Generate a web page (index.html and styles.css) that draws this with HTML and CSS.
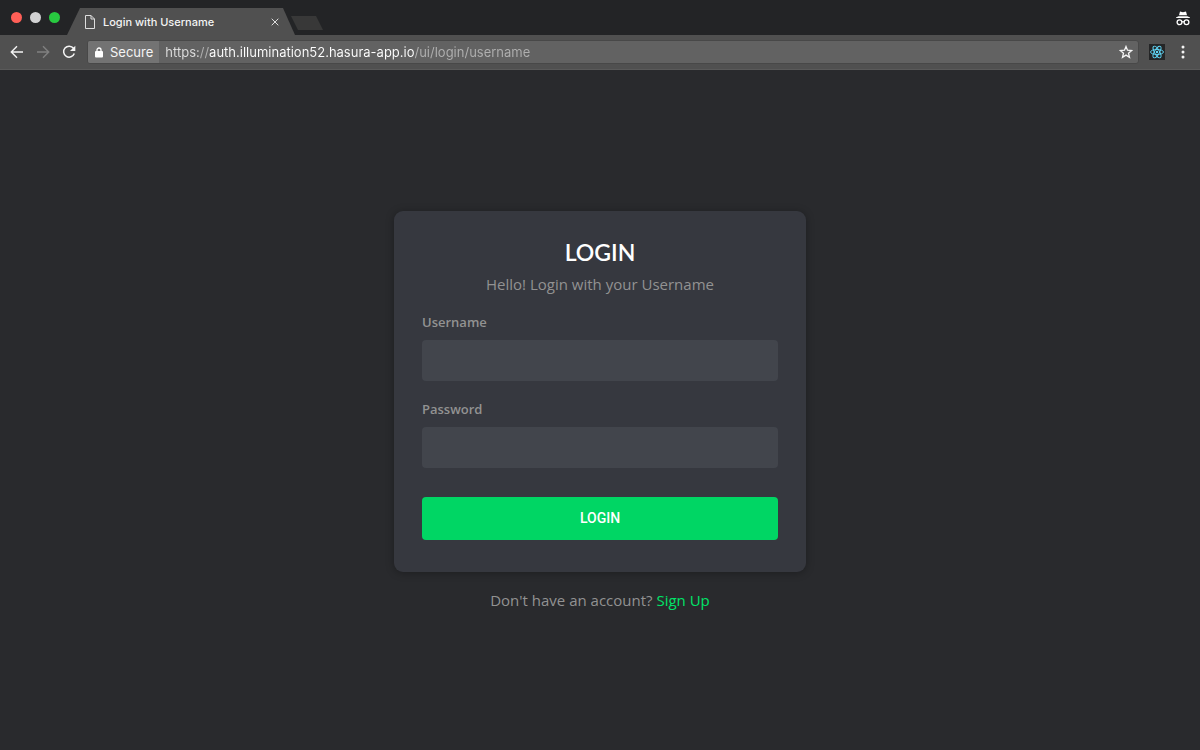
FILE: index.html
```html
<!DOCTYPE html>
<html lang="en">
<head>
<meta charset="UTF-8">
<meta name="viewport" content="width=device-width, initial-scale=1">
<title>Login with Username</title>
<link rel="stylesheet" href="styles.css">
</head>

<body>

<!-- Browser window -->
<header class="browser">
    <div class="tab-bar">
        <div class="lights">
            <button class="light red" aria-label="Close window"></button>
            <button class="light gray" aria-label="Minimize window"></button>
            <button class="light green" aria-label="Zoom window"></button>
        </div>
        <div class="tab">
            <svg class="page-icon" width="10" height="14" viewBox="0 0 10 14" fill="none" stroke="currentColor">
                <path d="M.5 .5H6L9.500 4V13.500H.5Z M6 .5V4H9.500"/>
            </svg>
            <span class="tab-title">Login with Username</span>
            <button class="tab-close" aria-label="Close tab">
                <svg width="8" height="8" viewBox="0 0 8 8" stroke="currentColor"><path d="M.7 .7 7.300 7.300M7.300 .7 .7 7.300"/></svg>
            </button>
        </div>
        <button class="new-tab" aria-label="New tab"></button>
        <svg class="incognito" width="14" height="15" viewBox="0 0 14 15" fill="none">
            <path d="M4 0.500 7 1.200 10 .5 11 4.200H3Z" fill="#fff"/>
            <path d="M0 6.500 2.500 5.300H11.500L14 6.500V7H0Z" fill="#fff"/>
            <circle cx="3.500" cy="11.300" r="2.400" stroke="#fff" stroke-width="1.300"/>
            <circle cx="10.500" cy="11.300" r="2.400" stroke="#fff" stroke-width="1.300"/>
            <path d="M5.800 11Q7 10.200 8.200 11" stroke="#fff" stroke-width="1.200"/>
        </svg>
    </div>

    <div class="toolbar">
        <button class="tool" aria-label="Back">
            <svg width="14" height="14" viewBox="0 0 14 14" fill="none" stroke="currentColor" stroke-width="1.400"><path d="M13 7H1.500M7 1.300 1.300 7 7 12.700"/></svg>
        </button>
        <button class="tool forward" aria-label="Forward" disabled>
            <svg width="14" height="14" viewBox="0 0 14 14" fill="none" stroke="currentColor" stroke-width="1.400"><path d="M1 7H12.500M7 1.300 12.700 7 7 12.700"/></svg>
        </button>
        <button class="tool" aria-label="Reload">
            <svg width="14" height="14" viewBox="0 0 14 14" fill="none" stroke="currentColor" stroke-width="1.500"><path d="M11.500 3.300A5.500 5.500 0 1 0 12.300 8.500"/><path d="M13.300 .8V6H8Z" fill="currentColor" stroke="none"/></svg>
        </button>
        <div class="address">
            <button class="secure">
                <svg width="8" height="11" viewBox="0 0 8 11" fill="none"><rect y="4" width="8" height="6.500" rx="1" fill="#fff"/><path d="M2 4.500V3A2 2 0 0 1 6 3V4.500" stroke="#fff" stroke-width="1.300"/></svg>
                Secure
            </button>
            <input class="url" type="text" aria-label="Address" spellcheck="false" value="https://auth.illumination52.hasura-app.io/ui/login/username">
            <button class="star" aria-label="Bookmark this page">
                <svg width="14" height="14" viewBox="0 0 14 14" fill="none" stroke="currentColor" stroke-width="1.300"><path d="M7 1.500 8.500 5.200 12.700 5.500 9.500 8.200 10.500 12.300 7 10.100 3.500 12.300 4.500 8.200 1.300 5.500 5.500 5.200Z"/></svg>
            </button>
        </div>
        <button class="react" aria-label="React Developer Tools">
            <svg width="14" height="14" viewBox="0 0 14 14" fill="none" stroke="#61dafb" stroke-width=".9">
                <ellipse cx="7" cy="7" rx="6.500" ry="2.500"/>
                <ellipse cx="7" cy="7" rx="6.500" ry="2.500" transform="rotate(60 7 7)"/>
                <ellipse cx="7" cy="7" rx="6.500" ry="2.500" transform="rotate(120 7 7)"/>
                <circle cx="7" cy="7" r="1.200" fill="#61dafb" stroke="none"/>
            </svg>
        </button>
        <button class="menu" aria-label="Menu">
            <svg width="4" height="14" viewBox="0 0 4 14" fill="currentColor"><circle cx="2" cy="2" r="1.500"/><circle cx="2" cy="7" r="1.500"/><circle cx="2" cy="12" r="1.500"/></svg>
        </button>
    </div>
</header>

<!-- Login page -->
<main class="page">
    <form class="card">
        <h1>LOGIN</h1>
        <p class="intro">Hello! Login with your Username</p>
        <label for="username">Username</label>
        <input class="field" id="username" type="text">
        <label for="password">Password</label>
        <input class="field" id="password" type="password">
        <button class="submit" type="submit">LOGIN</button>
    </form>
    <p class="signup">Don't have an account? <a href="#">Sign Up</a></p>
</main>

</body>
</html>
```
FILE: styles.css
```css
* {
    box-sizing: border-box;
}

body {
    margin: 0;
    min-height: 100vh;
    display: flex;
    flex-direction: column;
    background: #292a2d;
    font-family: "Open Sans", sans-serif;
}

button {
    padding: 0;
    border: 0;
    background: none;
    color: inherit;
    font: inherit;
}

svg {
    display: block;
    flex: none;
}

/* ===== Browser ===== */
.browser {
    color: #f4f4f4;
    font-family: Inter, sans-serif;
}

.tab-bar {
    display: flex;
    align-items: flex-end;
    height: 35px;
    background: #232426;
}

.lights {
    display: flex;
    gap: 8px;
    width: 67px;
    padding: 0 0 12px 11px;
}

.light {
    width: 11px;
    height: 11px;
    border-radius: 50%;
}

.red { background: #ff5f57; }
.gray { background: #d2d2d3; }
.green { background: #28c940; }

.tab {
    display: flex;
    align-items: center;
    width: 228px;
    height: 27px;
    padding: 0 16px 0 18px;
    background: #505050;
    clip-path: polygon(0 100%, 13px 0, 216px 0, 100% 100%);
    font-size: 11px;
    font-weight: 500;
}

.page-icon {
    color: #ddd;
}

.tab-title {
    flex: 1;
    margin-left: 8px;
    white-space: nowrap;
}

.tab-close {
    color: #ddd;
}

.new-tab {
    width: 32px;
    height: 14px;
    margin: 0 auto 5px -4px;
    background: #383838;
    clip-path: polygon(0 0, 25px 0, 100% 100%, 7px 100%);
}

.incognito {
    margin: 0 10px 9px 0;
}

.toolbar {
    display: flex;
    align-items: center;
    height: 35px;
    padding: 0 10px;
    border-bottom: 1px solid #5a5a5a;
    background: #505050;
}

.tool {
    width: 14px;
    margin-right: 12px;
}

.forward {
    color: #808080;
}

.address {
    display: flex;
    flex: 1;
    align-items: center;
    height: 24px;
    margin: 0 10px 0 -1px;
    border: 1px solid #484848;
    border-radius: 3px;
    background: #626262;
    font-size: 13px;
}

.secure {
    display: flex;
    align-items: center;
    gap: 7px;
    height: 100%;
    padding: 0 6px 0 7px;
    border-radius: 2px 0 0 2px;
    background: #737373;
}

/* scheme, host and path in their own shades */
.url {
    flex: 1;
    min-width: 0;
    margin-left: 6px;
    padding: 0;
    border: 0;
    outline: 0;
    background: linear-gradient(to right, #e0e0e0 34px, #b0b0b0 34px, #b0b0b0 44px, #fff 44px, #fff 249px, #b0b0b0 249px);
    -webkit-background-clip: text;
    background-clip: text;
    color: transparent;
    font: inherit;
}

.star {
    padding: 0 5px;
}

.react {
    padding: 1px;
    background: #242526;
}

.menu {
    margin: 0 5px 0 16px;
}

/* ===== Page ===== */
.page {
    display: flex;
    flex: 1;
    flex-direction: column;
    align-items: center;
    justify-content: center;
    padding: 24px;
    color: #929292;
    font-size: 15px;
}

.card {
    display: flex;
    flex-direction: column;
    width: 100%;
    max-width: 412px;
    padding: 28px 28px 32px;
    border-radius: 9px;
    background: #36383f;
    box-shadow: 0 1px 8px rgba(0, 0, 0, 0.3);
}

h1 {
    margin: 0;
    color: #fff;
    font-family: Lato, sans-serif;
    font-size: 23px;
    font-weight: 600;
    line-height: 26px;
    text-align: center;
}

.intro {
    margin: 9px 0 18px;
    line-height: 20px;
    text-align: center;
}

label {
    font-size: 13px;
    font-weight: 600;
    line-height: 20px;
}

.field {
    height: 41px;
    margin: 8px 0 18px;
    padding: 0 12px;
    border: 0;
    border-radius: 4px;
    background: #42454c;
    color: #fff;
    font: inherit;
}

.submit {
    height: 43px;
    margin-top: 11px;
    border-radius: 4px;
    background: #00d664;
    color: #fff;
    font-family: Roboto, sans-serif;
    font-size: 14px;
    font-weight: 500;
}

.signup {
    margin: 18px 0 0;
    line-height: 20px;
}

.signup a {
    color: #00e468;
    text-decoration: none;
}
```
